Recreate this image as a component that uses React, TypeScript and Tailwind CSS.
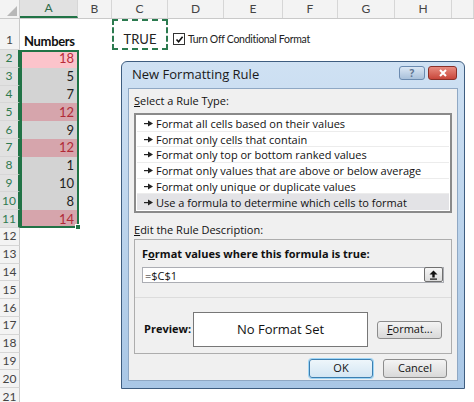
import React from "react";

// Spreadsheet columns (width in px) after the row header column
const COLS = [
  { name: "A", w: 58 },
  { name: "B", w: 34 },
  { name: "C", w: 56 },
  { name: "D", w: 56 },
  { name: "E", w: 59 },
  { name: "F", w: 55 },
  { name: "G", w: 57 },
  { name: "H", w: 57 },
  { name: "", w: 22 },
];

type Cell = { v: number; kind: "active" | "hit" | "plain" };

const DATA: Cell[] = [
  { v: 18, kind: "active" },
  { v: 5, kind: "plain" },
  { v: 7, kind: "plain" },
  { v: 12, kind: "hit" },
  { v: 9, kind: "plain" },
  { v: 12, kind: "hit" },
  { v: 1, kind: "plain" },
  { v: 10, kind: "plain" },
  { v: 8, kind: "plain" },
  { v: 14, kind: "hit" },
];

const RULES = [
  "Format all cells based on their values",
  "Format only cells that contain",
  "Format only top or bottom ranked values",
  "Format only values that are above or below average",
  "Format only unique or duplicate values",
  "Use a formula to determine which cells to format",
];

const CELL_BG: Record<Cell["kind"], string> = {
  active: "bg-[#fbc4cb] text-[#b82a38]",
  hit: "bg-[#d6a5ac] text-[#b02a36]",
  plain: "bg-[#d3d3d3] text-[#1f1f1f]",
};

function RuleArrow() {
  return (
    <svg width="9" height="7" viewBox="0 0 9 7" className="shrink-0">
      <rect x="0" y="3" width="5" height="1.2" fill="#222" />
      <polygon points="4,0.5 9,3.6 4,6.5" fill="#222" />
    </svg>
  );
}

function ColumnHeader() {
  return (
    <div className="flex h-[19px] bg-[#f3f3f3] border-b border-[#c9c9c9]">
      <div className="relative w-[20px] shrink-0 border-r border-[#d0d0d0]">
        <svg width="10" height="10" viewBox="0 0 10 10" className="absolute right-[2px] bottom-[2px]">
          <polygon points="10,0 10,10 0,10" fill="#b8b8b8" />
        </svg>
      </div>
      {COLS.map((c) => (
        <div
          key={c.name || "x"}
          style={{ width: c.w }}
          className={[
            "shrink-0 flex items-center justify-center text-[12px] leading-none border-r border-[#d6d6d6]",
            c.name === "A"
              ? "bg-[#e1e1e1] text-[#2e6b4a] border-b-2 border-b-[#217346]"
              : "text-[#444]",
          ].join(" ")}
        >
          {c.name}
        </div>
      ))}
    </div>
  );
}

function RowHeader({ n, selected, h }: { n: number; selected?: boolean; h: string }) {
  return (
    <div
      className={[
        "w-[20px] shrink-0 flex justify-center text-[12px] leading-none border-b border-[#d6d6d6]",
        h,
        selected
          ? "bg-[#e1e1e1] text-[#2e7a50] border-r-2 border-r-[#217346]"
          : "bg-[#f3f3f3] text-[#444] border-r border-r-[#c9c9c9]",
      ].join(" ")}
    >
      {n}
    </div>
  );
}

function Sheet() {
  return (
    <div className="relative" style={{ fontFamily: "Lato, 'Liberation Sans', sans-serif" }}>
      <ColumnHeader />
      {/* Row 1 */}
      <div className="flex h-[31px]">
        <RowHeader n={1} h="h-[31px] items-end pb-[3px]" />
        <div className="w-[58px] shrink-0 flex items-end pl-[4px] pb-[2px] text-[13px] leading-none font-bold text-[#111] tracking-tight">
          Numbers
        </div>
        <div className="w-[34px] shrink-0" />
        <div className="w-[56px] h-[31px] shrink-0 border-2 border-dashed border-[#2b7a4f] flex items-end justify-center pb-[2px] text-[13px] leading-none text-[#222]">
          TRUE
        </div>
        <div className="w-[56px] shrink-0 flex items-end pb-[5px] pl-[5px] whitespace-nowrap overflow-visible">
          <div className="flex items-center gap-[3px]">
            <div className="w-[12px] h-[12px] border border-[#333] bg-white flex items-center justify-center">
              <svg width="9" height="9" viewBox="0 0 9 9">
                <path d="M1.5 4.5 L3.6 6.8 L7.6 1.8" stroke="#111" strokeWidth="1.6" fill="none" />
              </svg>
            </div>
            <span className="text-[10.5px] leading-none tracking-[-0.3px] text-[#222]">
              Turn Off Conditional Format
            </span>
          </div>
        </div>
      </div>
      {/* Rows 2 .. 21 */}
      {Array.from({ length: 20 }, (_, i) => {
        const rowNo = i + 2;
        const cell = DATA[i];
        return (
          <div key={rowNo} className="flex h-[17.8px]">
            <RowHeader n={rowNo} selected={!!cell} h="h-[17.8px] items-center" />
            {cell ? (
              <div
                className={`w-[58px] h-[17.8px] shrink-0 flex items-center justify-end pr-[4px] text-[13px] leading-none ${CELL_BG[cell.kind]}`}
              >
                {cell.v}
              </div>
            ) : (
              <div className="w-[58px] shrink-0" />
            )}
          </div>
        );
      })}
      {/* selection outline over A2:A11 */}
      <div className="absolute left-[20px] top-[50px] w-[59px] h-[178px] border-2 border-[#217346] pointer-events-none">
        <div className="absolute -right-[4px] -bottom-[4px] w-[6px] h-[6px] bg-[#217346] border border-white" />
      </div>
    </div>
  );
}

function Dialog() {
  return (
    <div
      className="absolute left-[121px] top-[61px] w-[344px] h-[328px] rounded-t-[6px] border border-[#3e5d80] bg-gradient-to-b from-[#cfe1f3] via-[#bcd4ec] to-[#a9c7e6] flex flex-col px-[6px] pb-[7px] text-[#111]"
      style={{ fontFamily: "'Open Sans', 'Noto Sans', sans-serif" }}
    >
      {/* title bar */}
      <div className="h-[26px] flex items-center justify-between pl-[4px] shrink-0">
        <span className="text-[13px] text-[#1a1a1a]">New Formatting Rule</span>
        <div className="flex gap-[3px] -mt-[4px] mr-[1px]">
          <div className="w-[26px] h-[14px] rounded-[3px] border border-[#6b8bb0] bg-gradient-to-b from-[#dbe7f4] to-[#a8c0da] flex items-center justify-center text-[10px] font-bold text-[#5d7290] leading-none">
            ?
          </div>
          <div className="w-[29px] h-[14px] rounded-[3px] border border-[#8a3028] bg-gradient-to-b from-[#e88b7f] to-[#c8453a] flex items-center justify-center">
            <svg width="10" height="8" viewBox="0 0 10 8">
              <path d="M2 1 L8 7 M8 1 L2 7" stroke="white" strokeWidth="2" />
            </svg>
          </div>
        </div>
      </div>

      {/* client area */}
      <div className="flex-1 bg-[#f0f0f0] border border-[#8fa8c4] flex flex-col px-[5px] pt-[5px]">
        <div className="text-[11px] leading-[14px] mb-[5px]">
          <span className="underline">S</span>elect a Rule Type:
        </div>
        <div className="border-2 border-[#8a8a8a] bg-white p-[1px] flex flex-col">
          {RULES.map((r, i) => (
            <div
              key={r}
              className={[
                "h-[15.7px] flex items-center gap-[3px] pl-[7px] text-[11px] leading-none",
                i === RULES.length - 1 ? "bg-[#e3e3e6]" : "border-b border-[#ececec]",
              ].join(" ")}
            >
              <RuleArrow />
              <span className="whitespace-nowrap">{r}</span>
            </div>
          ))}
        </div>

        <div className="text-[11px] leading-[14px] mt-[10px] mb-[2px]">
          <span className="underline">E</span>dit the Rule Description:
        </div>
        <div className="border border-[#adadad] bg-[#f0f0f0] flex flex-col">
          <div className="px-[7px] pt-[7px] pb-[14px] border-b border-[#dcdcdc]">
            <div className="text-[11px] font-bold leading-[14px] mb-[6px]">
              F<span className="underline">o</span>rmat values where this formula is true:
            </div>
            <div className="h-[16px] bg-white border border-[#abadb3] flex items-center justify-between pl-[2px]">
              <span className="text-[11px] leading-none">=$C$1</span>
              <div className="w-[19px] h-[15px] -mt-[1px] border border-[#707070] rounded-[2px] bg-gradient-to-b from-[#f6f6f6] to-[#dcdcdc] flex items-center justify-center">
                <svg width="9" height="10" viewBox="0 0 9 10">
                  <polygon points="4.5,0.5 8.5,4.5 0.5,4.5" fill="#111" />
                  <rect x="3.3" y="4" width="2.4" height="3.5" fill="#111" />
                  <rect x="1" y="8.5" width="7" height="1.2" fill="#111" />
                </svg>
              </div>
            </div>
          </div>
          <div className="flex items-center px-[9px] pt-[14px] pb-[6px]">
            <span className="w-[49px] text-[11px] font-bold">Preview:</span>
            <div className="w-[177px] h-[35px] bg-white border border-[#777] flex items-center justify-center text-[13px]">
              No Format Set
            </div>
            <div className="ml-[9px] w-[65px] h-[18px] rounded-[3px] border border-[#8c8c8c] bg-gradient-to-b from-[#f4f4f4] to-[#d9d9d9] flex items-center justify-center text-[11px]">
              <span className="underline">F</span>ormat...
            </div>
          </div>
        </div>

        <div className="flex justify-end gap-[10px] mt-[5px] pr-[5px]">
          <div className="w-[64px] h-[19px] rounded-[3px] border border-[#3c7fb1] shadow-[0_0_0_1px_#9fd5f5] bg-gradient-to-b from-[#eef6fb] to-[#d3e6f3] flex items-center justify-center text-[11px]">
            OK
          </div>
          <div className="w-[64px] h-[19px] rounded-[3px] border border-[#8c8c8c] bg-gradient-to-b from-[#f4f4f4] to-[#d9d9d9] flex items-center justify-center text-[11px]">
            Cancel
          </div>
        </div>
      </div>
    </div>
  );
}

export default function App() {
  return (
    <div className="relative w-[474px] h-[402px] overflow-hidden bg-white">
      <Sheet />
      <Dialog />
    </div>
  );
}
